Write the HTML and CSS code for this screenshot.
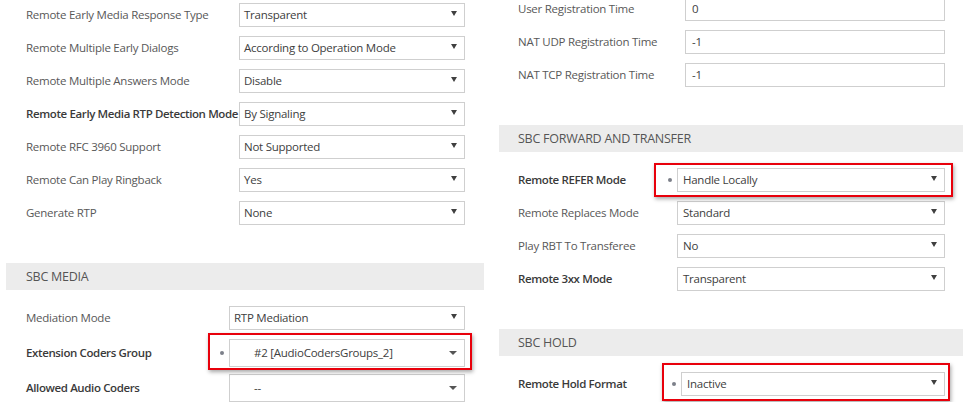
FILE: index.html
```html
<!DOCTYPE html>
<html lang="en">
<head>
<meta charset="utf-8">
<title>SBC Settings</title>
<link rel="stylesheet" href="styles.css">
</head>
<body>
<div class="page">
  <div class="col col-left">
    <div class="group g-top-left">
      <div class="row"><div class="label">Remote Early Media Response Type</div><div class="sel"><span>Transparent</span><i class="arr"></i></div></div>
      <div class="row"><div class="label">Remote Multiple Early Dialogs</div><div class="sel"><span>According to Operation Mode</span><i class="arr"></i></div></div>
      <div class="row"><div class="label">Remote Multiple Answers Mode</div><div class="sel"><span>Disable</span><i class="arr"></i></div></div>
      <div class="row"><div class="label bold">Remote Early Media RTP Detection Mode</div><div class="sel"><span>By Signaling</span><i class="arr"></i></div></div>
      <div class="row"><div class="label">Remote RFC 3960 Support</div><div class="sel"><span>Not Supported</span><i class="arr"></i></div></div>
      <div class="row"><div class="label">Remote Can Play Ringback</div><div class="sel"><span>Yes</span><i class="arr"></i></div></div>
      <div class="row"><div class="label">Generate RTP</div><div class="sel"><span>None</span><i class="arr"></i></div></div>
    </div>
    <div class="header">SBC MEDIA</div>
    <div class="group g-media">
      <div class="row tall"><div class="label">Mediation Mode</div><div class="sel"><span>RTP Mediation</span><i class="arr"></i></div></div>
      <div class="row tall"><div class="label bold">Extension Coders Group</div><div class="sel sel-alt hl hl-ext"><span>#2 [AudioCodersGroups_2]</span><i class="arr arr-wide"></i></div></div>
      <div class="row tall"><div class="label bold">Allowed Audio Coders</div><div class="sel sel-alt"><span>--</span><i class="arr arr-wide"></i></div></div>
    </div>
  </div>
  <div class="col col-right">
    <div class="group g-top-right">
      <div class="row"><div class="label">User Registration Time</div><div class="inp">0</div></div>
      <div class="row"><div class="label">NAT UDP Registration Time</div><div class="inp">-1</div></div>
      <div class="row"><div class="label">NAT TCP Registration Time</div><div class="inp">-1</div></div>
    </div>
    <div class="header">SBC FORWARD AND TRANSFER</div>
    <div class="group g-fwd">
      <div class="row"><div class="label bold">Remote REFER Mode</div><div class="sel hl hl-refer"><span>Handle Locally</span><i class="arr"></i></div></div>
      <div class="row"><div class="label">Remote Replaces Mode</div><div class="sel"><span>Standard</span><i class="arr"></i></div></div>
      <div class="row"><div class="label">Play RBT To Transferee</div><div class="sel"><span>No</span><i class="arr"></i></div></div>
      <div class="row"><div class="label bold">Remote 3xx Mode</div><div class="sel"><span>Transparent</span><i class="arr"></i></div></div>
    </div>
    <div class="header">SBC HOLD</div>
    <div class="group g-hold">
      <div class="row"><div class="label bold">Remote Hold Format</div><div class="sel hl hl-hold"><span>Inactive</span><i class="arr"></i></div></div>
    </div>
  </div>
</div>
</body>
</html>
```

FILE: styles.css
```css
html, body {
  margin: 0;
  padding: 0;
  background: #ffffff;
  overflow: hidden;
}
body {
  font-family: "Open Sans", "Liberation Sans", sans-serif;
  font-size: 11.5px;
  letter-spacing: -0.25px;
  color: #555555;
}
.page {
  display: flex;
  gap: 15px;
  padding-left: 6px;
  height: 402px;
}
.col-left { width: 478px; }
.col-right { width: 464px; }

.group { display: flex; flex-direction: column; }
.g-top-left { margin-top: -2px; padding-left: 20px; }
.g-media { margin-top: 10px; padding-left: 20px; }
.g-top-right { margin-top: -8px; padding-left: 19px; }
.g-fwd { margin-top: 11px; padding-left: 19px; }
.g-hold { margin-top: 11px; padding-left: 19px; }

.row {
  height: 33px;
  display: flex;
  align-items: center;
}
.row.tall { height: 35px; }

.label {
  flex: none;
  white-space: nowrap;
  color: #585858;
}
.label.bold { font-weight: 600; color: #3a3a3a; letter-spacing: -0.38px; }

.g-top-left .label { width: 213px; }
.g-top-left .sel { width: 226px; }
.g-media .label { width: 203px; }
.g-media .sel { width: 236px; }
.g-top-right .label { width: 167px; }
.g-fwd .label { width: 159px; }
.g-fwd .sel { width: 268px; }
.g-hold .label { width: 163px; }
.g-hold .sel { width: 264px; }

.sel, .inp {
  box-sizing: border-box;
  height: 24px;
  border: 1px solid #cfcfcf;
  background: #ffffff;
  display: flex;
  align-items: center;
  padding-left: 4px;
  color: #404040;
  white-space: nowrap;
  flex: none;
}
.sel span { flex: 1; }
.inp { width: 260px; padding-left: 6px; }
.g-fwd .sel, .g-hold .sel { padding-left: 5px; }

.sel-alt { height: 28px; padding-left: 24px; }

.arr {
  width: 0;
  height: 0;
  border-left: 3px solid transparent;
  border-right: 3px solid transparent;
  border-top: 5px solid #404040;
  margin-right: 7px;
  margin-top: -3px;
}
.arr-wide {
  border-left-width: 4px;
  border-right-width: 4px;
  border-top-width: 4px;
  border-top-color: #555555;
  margin-top: 0;
}

.header {
  height: 27px;
  line-height: 27px;
  margin-top: 34px;
  background: #ececec;
  font-size: 12.5px;
  color: #555555;
}
.col-left .header { padding-left: 20px; }
.col-right .header { padding-left: 19px; }

/* highlight overlay (red callout around a field) */
.hl { position: relative; }
.hl::before {
  content: "";
  position: absolute;
  border: 2px solid #e8000b;
  box-shadow: 1px 2px 4px rgba(0, 0, 0, 0.35);
  pointer-events: none;
}
.hl::after {
  content: "";
  position: absolute;
  left: -10px;
  top: 50%;
  width: 4px;
  height: 4px;
  margin-top: -2px;
  border-radius: 50%;
  background: #7c808a;
}
.hl-ext::before { left: -22px; right: -8px; top: -7px; bottom: -4px; }
.hl-refer::before { left: -24px; right: -9px; top: -6px; bottom: -6px; }
.hl-hold::before { left: -20px; right: -6px; top: -10px; bottom: -6px; }
```
